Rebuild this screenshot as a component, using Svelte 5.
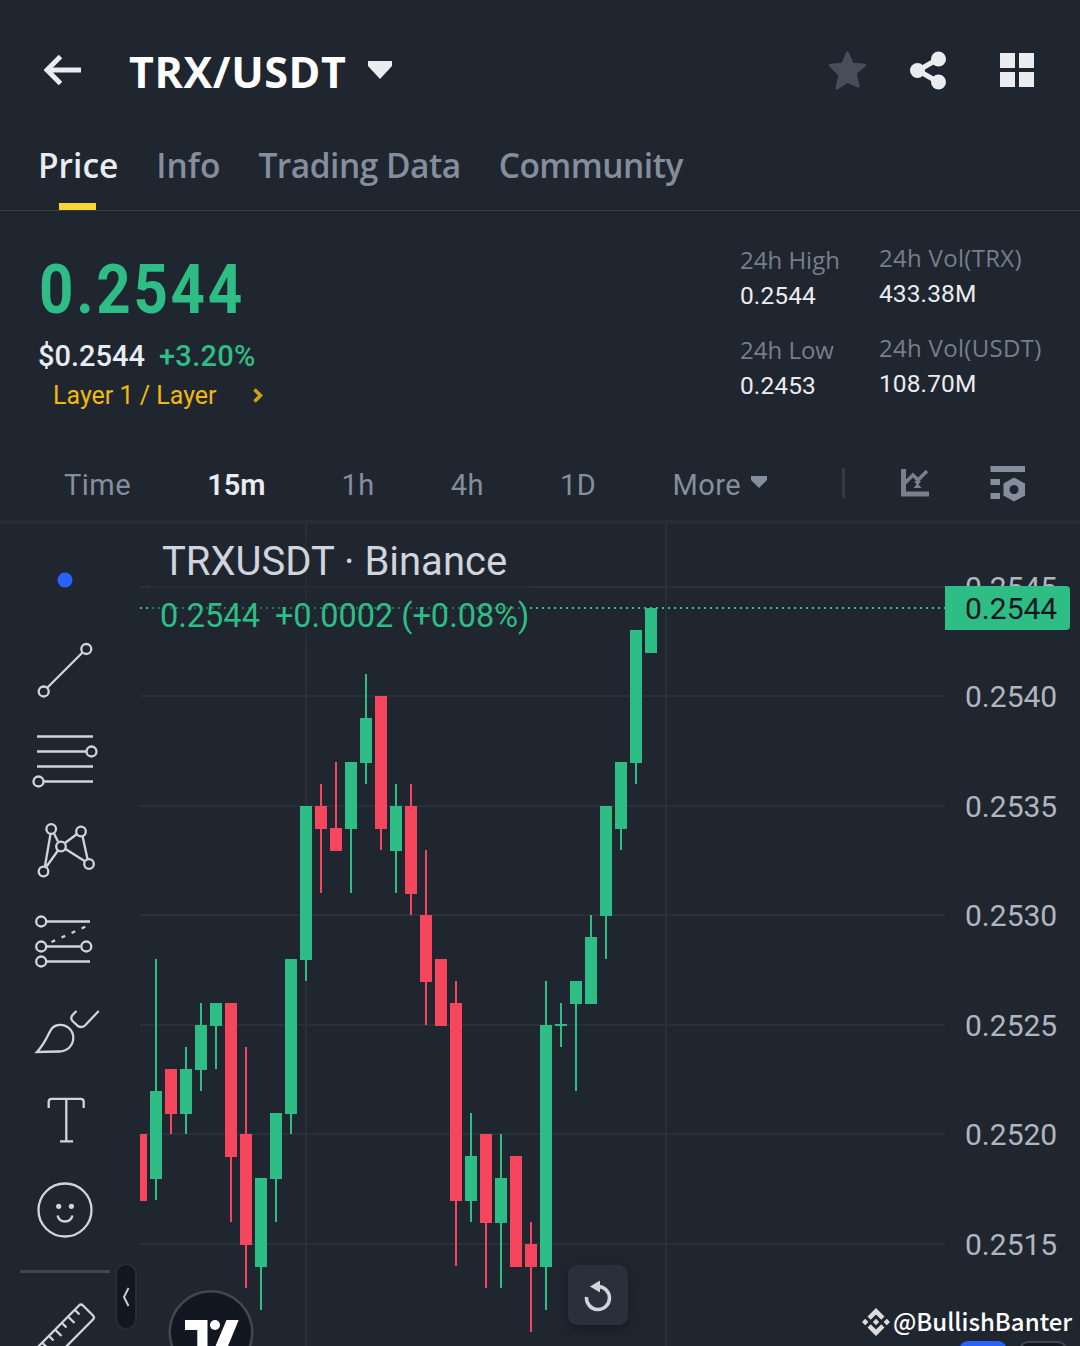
<script lang="ts">
  const tabs = ["Price", "Info", "Trading Data", "Community"];
  const intervals = ["Time", "15m", "1h", "4h", "1D"];
  const stats = [
    [
      { label: "24h High", value: "0.2544" },
      { label: "24h Low", value: "0.2453" },
    ],
    [
      { label: "24h Vol(TRX)", value: "433.38M" },
      { label: "24h Vol(USDT)", value: "108.70M" },
    ],
  ];

  let activeTab = $state("Price");
  let activeInterval = $state("15m");

  // open, high, low, close in 0.0001 steps above 0.2500
  const candles = [
    [20, 20, 17, 17],
    [18, 28, 17, 22],
    [23, 23, 20, 21],
    [21, 24, 20, 23],
    [23, 26, 22, 25],
    [25, 26, 23, 26],
    [26, 26, 16, 19],
    [20, 24, 13, 15],
    [14, 18, 12, 18],
    [18, 21, 16, 21],
    [21, 28, 20, 28],
    [28, 35, 27, 35],
    [35, 36, 31, 34],
    [34, 37, 33, 33],
    [34, 37, 31, 37],
    [37, 41, 36, 39],
    [40, 40, 33, 34],
    [33, 36, 31, 35],
    [35, 36, 30, 31],
    [30, 33, 25, 27],
    [28, 28, 25, 25],
    [26, 27, 14, 17],
    [17, 21, 16, 19],
    [20, 20, 13, 16],
    [16, 20, 13, 18],
    [19, 19, 14, 14],
    [15, 16, 11, 14],
    [14, 27, 12, 25],
    [25, 26, 24, 25],
    [26, 27, 22, 27],
    [26, 30, 26, 29],
    [30, 35, 28, 35],
    [34, 37, 33, 37],
    [37, 43, 36, 43],
    [42, 44, 42, 44],
  ];
  const levels = [45, 40, 35, 30, 25, 20, 15];

  const y = (tick: number) => Math.round(696.1 + (40 - tick) * 21.918);

  const bars = candles.map(([open, high, low, close], i) => {
    const top = y(Math.max(open, close));
    const bottom = y(Math.min(open, close)) + 1;
    const flat = open === close;
    return {
      x: 141 + i * 15,
      up: close >= open,
      top: flat ? top - 1 : top,
      height: flat ? 2 : bottom - top,
      high: y(high),
      low: y(low),
    };
  });
</script>

<div class="screen">
  <header>
    <svg class="back" width="38" height="30" viewBox="0 0 38 30">
      <path d="M37 15H4M16.500 1.500L3 15L16.500 28.500" fill="none" stroke="#eaecef" stroke-width="5" />
    </svg>
    <h1>TRX/USDT</h1>
    <svg class="caret" width="24" height="18" viewBox="0 0 24 18">
      <path d="M0 0h24v5L12 18L0 5z" fill="#eaecef" />
    </svg>
    <div class="actions">
      <svg width="38" height="40" viewBox="0 0 38 40">
        <path
          d="M19.500 3l4.700 11.200 12.300 1-9.400 8 2.900 12.800L19.500 31.300 9 38l2.900-12.800L2.500 15.200l12.300-1z"
          fill="#474d5b" stroke="#474d5b" stroke-width="3" stroke-linejoin="round" />
      </svg>
      <svg width="38" height="40" viewBox="0 0 38 40">
        <path d="M29 9L9 20.500L29 32" fill="none" stroke="#eaecef" stroke-width="5" />
        <circle cx="8.500" cy="20.500" r="7.500" fill="#eaecef" />
        <circle cx="29.500" cy="9" r="7.500" fill="#eaecef" />
        <circle cx="29.500" cy="32" r="7.500" fill="#eaecef" />
      </svg>
      <svg width="34" height="34" viewBox="0 0 34 34">
        <path d="M0 0h15v15H0zM19 0h15v15H19zM0 19h15v15H0zM19 19h15v15H19z" fill="#eaecef" />
      </svg>
    </div>
  </header>

  <nav class="tabs">
    {#each tabs as tab}
      <button class:active={tab === activeTab} onclick={() => (activeTab = tab)}>{tab}</button>
    {/each}
  </nav>

  <section class="summary">
    <div class="last">
      <strong>0.2544</strong>
      <p><span class="fiat">$0.2544</span><span class="change">+3.20%</span></p>
      <a href="#layer">
        <span>Layer 1 / Layer</span>
        <svg width="12" height="16" viewBox="0 0 12 16">
          <path d="M2.500 1.500l6 6-6 6" fill="none" stroke="#d3a011" stroke-width="3.500" />
        </svg>
      </a>
    </div>
    {#each stats as column, i}
      <div class="stats" class:wide={i === 1}>
        {#each column as stat}
          <div class="stat">
            <span>{stat.label}</span>
            <b>{stat.value}</b>
          </div>
        {/each}
      </div>
    {/each}
  </section>

  <nav class="intervals">
    {#each intervals as interval}
      <button class:active={interval === activeInterval} onclick={() => (activeInterval = interval)}>{interval}</button>
    {/each}
    <button class="more">
      <span>More</span>
      <svg width="16" height="12" viewBox="0 0 16 12"><path d="M0 0h16v4L8 12L0 4z" fill="#848e9c" /></svg>
    </button>
    <i></i>
    <svg class="indicator" width="28" height="28" viewBox="0 0 28 28">
      <g fill="none" stroke="#78808f">
        <path d="M2.500 0v25H28" stroke-width="5" />
        <path d="M4 14L12 6l5 5L26 2" stroke-width="3.500" />
      </g>
      <path d="M13 12h7l-2.500 3.500 3 3.500h-8l3-3.500z" fill="#78808f" />
    </svg>
    <svg class="settings" width="36" height="38" viewBox="0 0 36 38">
      <path d="M0.500 1h34.500v6H0.500zM0.500 14h9.500v6H0.500zM0.500 28h9.500v6H0.500z" fill="#848e9c" />
      <path d="M24 12.500l11 6v12l-11 6-10.500-6v-12zM24 20a4.500 4.500 0 1 0 .01 0z" fill="#848e9c" fill-rule="evenodd" />
    </svg>
  </nav>

  <main>
    <aside>
      <svg viewBox="0 0 90 90"><circle class="dot" cx="45" cy="45" r="7.500" /></svg>
      <svg viewBox="0 0 90 90">
        <path d="M27.500 62.500L62.500 27.500" />
        <circle cx="66.300" cy="24" r="5" /><circle cx="23.700" cy="66.500" r="5" />
      </svg>
      <svg viewBox="0 0 90 90">
        <path d="M17 21.500h56M17 36.500h49M17 51.500h56M24 66.500h49" />
        <circle cx="71.500" cy="36.500" r="5" /><circle cx="18.500" cy="66.500" r="5" />
      </svg>
      <svg viewBox="0 0 90 90">
        <path d="M30.500 29L25 61M34 28.500l4 8M45 38l12-9M62.500 31l5 23M45.500 44l19 12M38 45.500L26.500 61.500" />
        <circle cx="31.200" cy="24" r="4.800" /><circle cx="61" cy="26.500" r="4.800" /><circle cx="41" cy="41.500" r="4.800" />
        <circle cx="69" cy="59" r="4.800" /><circle cx="23.500" cy="66.500" r="4.800" />
      </svg>
      <svg viewBox="0 0 90 90">
        <path d="M26.500 26.500h43.500M26.500 51.500h34M26.500 66.500h43.500" />
        <path d="M31.500 47L67 31" stroke-dasharray="4 7" />
        <circle cx="21.200" cy="26.500" r="5" /><circle cx="21.200" cy="51.500" r="5" />
        <circle cx="21.200" cy="66.500" r="5" /><circle cx="66.300" cy="51.500" r="5" />
      </svg>
      <svg viewBox="0 0 90 90">
        <path d="M17 67C31 52 28 40 40 39.800C48 39.800 53.300 46 53.300 53C53 61 47 66.500 39 66.500z" />
        <path d="M56.500 26L52.500 30Q50 33.500 52.500 36L57.500 40.700Q61.500 43.500 65 40.500L78.700 26" />
      </svg>
      <svg viewBox="0 0 90 90">
        <path d="M28.700 33v-6.500q0-2.700 3-2.700h29q3 0 3 2.700v6.500M46.300 24v42.500M40 66.300h13" />
      </svg>
      <svg viewBox="0 0 90 90">
        <circle cx="45" cy="45" r="26.500" />
        <circle class="eye" cx="38.700" cy="41.300" r="2.600" /><circle class="eye" cx="51.400" cy="41.300" r="2.600" />
        <path d="M37.500 50.500c2 8 13 8 15 0" />
      </svg>
      <hr />
      <svg viewBox="0 0 90 90">
        <path d="M4 76L59 20.500q2-2 4 0l10 10q2 2 0 4L24 84M55 25l4.500 4.500M48 31.500l6.500 6.500M42 38l4.500 4.500M35 44.500l6.500 6.500M29 51l4.500 4.500M22 57.500l6.500 6.500" />
      </svg>
      <button class="collapse" aria-label="Hide toolbar">
        <svg width="8" height="20" viewBox="0 0 8 20"><path d="M6.500 1L2 10l4.500 9" fill="none" stroke="#c8cad3" stroke-width="2" /></svg>
      </button>
    </aside>

    <div class="chart">
      <svg width="940" height="826" viewBox="140 520 940 826">
        <rect x="140" y="520" width="940" height="4" fill="#262d37" />
        <g fill="#2a303b">
          {#each levels as level}
            <rect x="140" y={y(level) - 1} width="805" height="2" />
          {/each}
          <rect x="305" y="520" width="2" height="826" />
          <rect x="665" y="520" width="2" height="826" />
        </g>
        <path d="M140 608H945" stroke="#2ebd85" stroke-width="2" stroke-dasharray="2 4" />

        {#each bars as bar}
          <g class={bar.up ? "up" : "down"}>
            <rect x={bar.x - 1} y={bar.high} width="2" height={bar.low - bar.high} />
            <rect x={Math.max(bar.x - 6, 140)} y={bar.top} width={bar.x < 146 ? 7 : 12} height={bar.height} />
          </g>
        {/each}

        {#each levels as level}
          <text class="tick" x="965" y={y(level) + 10.900}>0.25{level}</text>
        {/each}
        <path d="M945 586h121a4 4 0 0 1 4 4v36a4 4 0 0 1-4 4H945z" fill="#2ebd85" />
        <text class="tick current" x="965" y="619">0.2544</text>

        <circle cx="211" cy="1332.500" r="41.300" fill="#131722" stroke="#434651" stroke-width="2.600" />
        <path d="M185 1320h22.500v30h-10.200v-20H185zM226.500 1320h12.200l-11.500 28h-12.500z" fill="#fff" />
        <circle cx="215" cy="1325" r="5" fill="#fff" />

        <rect x="959" y="1341" width="48" height="30" rx="9" fill="#2962ff" />
        <rect x="1020" y="1342" width="46" height="30" rx="8" fill="#131722" stroke="#434651" stroke-width="2" />
      </svg>

      <div class="legend">
        <h2>TRXUSDT · Binance</h2>
        <p><span>0.2544</span><span>+0.0002 (+0.08%)</span></p>
      </div>

      <button class="reset" aria-label="Reset chart">
        <svg width="60" height="60" viewBox="0 0 60 60">
          <path d="M18.500 32A11.500 11.500 0 1 0 30 21.500" fill="none" stroke="#d1d4dc" stroke-width="3.500" />
          <path d="M22 21.500L32 15.500V27.500z" fill="#d1d4dc" />
        </svg>
      </button>

      <div class="watermark">
        <svg width="28" height="28" viewBox="0 0 28 28" fill="#dcdcdc">
          <path d="M14 0l8.500 8.500-3.200 3.200L14 6.400l-5.300 5.300-3.200-3.200zM14 28l8.500-8.500-3.200-3.200L14 21.600l-5.300-5.300-3.200 3.200z" />
          <path d="M14 10.800l3.200 3.200-3.200 3.200-3.200-3.200zM3.200 10.800L6.400 14l-3.200 3.200L0 14zM24.800 10.800L28 14l-3.200 3.200-3.200-3.200z" />
        </svg>
        <span>@BullishBanter</span>
      </div>
    </div>
  </main>
</div>

<style>
  :global(body) {
    background: #202630;
  }
  .screen {
    width: 1080px;
    height: 1346px;
    overflow: hidden;
    background: #202630;
    color: #eaecef;
    font-family: "Open Sans", "Noto Sans", sans-serif;
  }
  button {
    border: 0;
    padding: 0;
    background: none;
    color: inherit;
    font: inherit;
    letter-spacing: inherit;
    white-space: nowrap;
  }
  h1,
  h2,
  p {
    margin: 0;
    font-weight: inherit;
    white-space: nowrap;
  }
  svg {
    display: block;
    flex: none;
  }

  header {
    display: flex;
    align-items: center;
    height: 140px;
    padding: 0 46px 0 44px;
  }
  h1 {
    margin-left: 47px;
    padding-top: 3px;
    width: 221px;
    color: #fff;
    font-size: 43px;
    font-weight: 700;
    letter-spacing: 0.6px;
  }
  .caret {
    margin-left: 18px;
  }
  .actions {
    display: flex;
    align-items: center;
    gap: 43px;
    margin-left: auto;
  }
  .actions svg:last-child {
    margin-left: 10px;
  }

  .tabs {
    display: flex;
    gap: 38px;
    height: 70px;
    padding-left: 38px;
    border-bottom: 1px solid #333b47;
    color: #848e9c;
    font-size: 33.5px;
    font-weight: 580;
    letter-spacing: -0.5px;
  }
  .tabs button {
    position: relative;
    height: 50px;
    line-height: 50px;
  }
  .tabs button:nth-child(-n + 2) {
    letter-spacing: 0;
  }
  .tabs .active {
    color: #eaecef;
  }
  .tabs .active::after {
    content: "";
    position: absolute;
    left: 21px;
    top: 63px;
    width: 37px;
    height: 7px;
    background: #fcd535;
  }

  .summary {
    display: flex;
    height: 239px;
    padding-left: 39px;
    white-space: nowrap;
  }
  .last {
    width: 701px;
    padding-top: 39px;
    font-family: Roboto, sans-serif;
    font-weight: 500;
  }
  .last strong {
    display: block;
    width: max-content;
    color: #2ebd85;
    font-size: 69px;
    font-weight: 700;
    line-height: 80px;
    letter-spacing: 3.1px;
    transform: scaleX(0.87);
    transform-origin: left;
  }
  .last p {
    display: flex;
    gap: 14px;
    margin: 6px 0 0 -1px;
    font-size: 29px;
    line-height: 40px;
  }
  .change {
    color: #2ebd85;
    letter-spacing: 0.3px;
  }
  .last a {
    display: flex;
    align-items: center;
    gap: 35px;
    padding: 1px 0 0 14px;
    color: #f0b90b;
    font-size: 25px;
    font-weight: 400;
    line-height: 38px;
    text-decoration: none;
  }
  .stats {
    width: 139px;
    padding-top: 33px;
  }
  .stats.wide {
    padding-top: 31px;
  }
  .stat {
    display: flex;
    flex-direction: column;
    height: 90px;
    font-size: 24px;
    line-height: 32px;
  }
  .stat span {
    color: #757e8c;
  }
  .wide .stat span {
    letter-spacing: 0.3px;
  }
  .stat b {
    margin-top: 4px;
    font-family: Roboto, sans-serif;
    font-size: 24.500px;
    font-weight: 430;
    letter-spacing: 0.1px;
  }

  .intervals {
    display: flex;
    align-items: center;
    height: 70px;
    padding-left: 64px;
    color: #848e9c;
    font-family: Roboto, sans-serif;
    font-size: 29px;
    letter-spacing: 0.5px;
  }
  .intervals button {
    margin-right: 76px;
  }
  .intervals .active {
    color: #eaecef;
    font-weight: 600;
    letter-spacing: 0;
  }
  .intervals .more {
    display: flex;
    align-items: center;
    gap: 10px;
    margin-right: 75px;
  }
  .more svg {
    margin-bottom: 6px;
  }
  .intervals i {
    width: 3px;
    height: 30px;
    margin-bottom: 4px;
    background: #343c48;
  }
  .indicator {
    margin: 0 0 4px 56px;
  }
  .settings {
    margin: 0 0 2px 61px;
  }

  main {
    display: flex;
    height: 826px;
  }
  aside {
    position: relative;
    width: 140px;
    box-sizing: border-box;
    padding: 11px 0 0 20px;
    border-top: 4px solid #262d37;
  }
  aside > svg {
    width: 90px;
    height: 90px;
    fill: none;
    stroke: #d1d4dc;
    stroke-width: 2.3;
  }
  aside .dot {
    fill: #2962ff;
    stroke: none;
  }
  aside .eye {
    fill: #d1d4dc;
    stroke: none;
  }
  hr {
    width: 90px;
    height: 3px;
    margin: 15px 0 12px;
    border: 0;
    background: #434651;
  }
  .collapse {
    position: absolute;
    left: 115px;
    top: 739px;
    display: flex;
    align-items: center;
    justify-content: center;
    width: 22px;
    height: 67px;
    border: 2px solid #262c38;
    border-radius: 11px;
    background: #131722;
  }

  .chart {
    position: relative;
    width: 940px;
    font-family: Roboto, sans-serif;
  }
  .up {
    fill: #2ebd85;
  }
  .down {
    fill: #f6465d;
  }
  .tick {
    fill: #b2b5be;
    font-size: 30px;
  }
  .current {
    fill: #131722;
  }
  .legend {
    position: absolute;
    left: 10px;
    top: 15px;
    padding: 0 0 0 10px;
    background: rgba(32, 38, 48, 0.5);
  }
  .legend h2 {
    padding-left: 2px;
    color: #d1d4dc;
    font-size: 40px;
    line-height: 54px;
  }
  .legend p {
    display: flex;
    gap: 15px;
    color: #2ebd85;
    font-size: 32.5px;
    line-height: 54px;
  }
  .reset {
    position: absolute;
    left: 428px;
    top: 745px;
    width: 60px;
    height: 60px;
    border-radius: 9px;
    background: #2a303b;
    box-shadow: 0 4px 10px rgba(10, 13, 20, 0.5);
  }
  .watermark {
    position: absolute;
    left: 722px;
    top: 785px;
    display: flex;
    align-items: center;
    gap: 3px;
    color: #fff;
    font-family: "Noto Sans CJK SC", sans-serif;
    font-size: 24px;
    font-weight: 500;
    line-height: 32px;
  }
  .watermark svg {
    margin-top: 2px;
  }
</style>
